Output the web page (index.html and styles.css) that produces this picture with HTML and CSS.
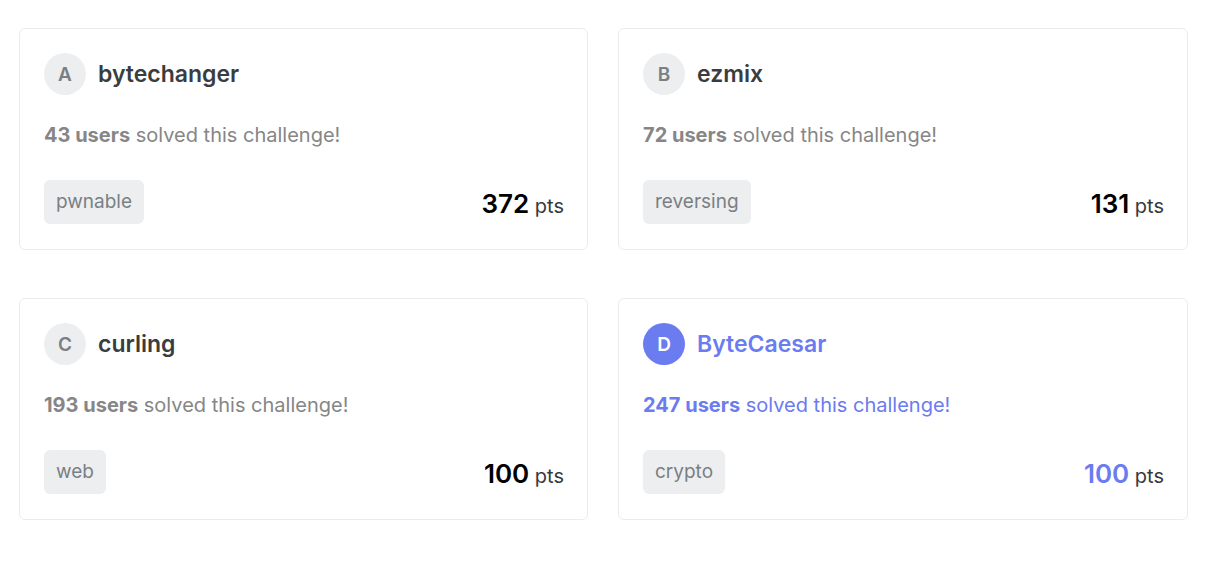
FILE: index.html
```html
<!DOCTYPE html>
<html lang="en">
<head>
    <meta charset="UTF-8">
    <meta name="viewport" content="width=device-width, initial-scale=1.0">
    <title>Challenges</title>
    <link rel="stylesheet" href="styles.css">
</head>
<body>
<!-- Challenge list -->
<section class="challenge-grid">
    <div class="challenge">
        <div class="challenge-head">
            <span class="challenge-letter">A</span>
            <h3>bytechanger</h3>
        </div>
        <p class="challenge-solved"><b>43 users</b> solved this challenge!</p>
        <div class="challenge-foot">
            <span class="challenge-tag">pwnable</span>
            <span class="challenge-points"><b>372</b> pts</span>
        </div>
    </div>

    <div class="challenge">
        <div class="challenge-head">
            <span class="challenge-letter">B</span>
            <h3>ezmix</h3>
        </div>
        <p class="challenge-solved"><b>72 users</b> solved this challenge!</p>
        <div class="challenge-foot">
            <span class="challenge-tag">reversing</span>
            <span class="challenge-points"><b>131</b> pts</span>
        </div>
    </div>

    <div class="challenge">
        <div class="challenge-head">
            <span class="challenge-letter">C</span>
            <h3>curling</h3>
        </div>
        <p class="challenge-solved"><b>193 users</b> solved this challenge!</p>
        <div class="challenge-foot">
            <span class="challenge-tag">web</span>
            <span class="challenge-points"><b>100</b> pts</span>
        </div>
    </div>

    <div class="challenge active">
        <div class="challenge-head">
            <span class="challenge-letter">D</span>
            <h3>ByteCaesar</h3>
        </div>
        <p class="challenge-solved"><b>247 users</b> solved this challenge!</p>
        <div class="challenge-foot">
            <span class="challenge-tag">crypto</span>
            <span class="challenge-points"><b>100</b> pts</span>
        </div>
    </div>
</section>
</body>
</html>
```

FILE: styles.css
```css
* {
    margin: 0;
    padding: 0;
    box-sizing: border-box;
}

body {
    font-family: Inter, "Noto Sans", sans-serif;
    background-color: #fff;
    color: #343a40;
}

.challenge-grid {
    display: grid;
    grid-template-columns: 569px 570px;
    column-gap: 30px;
    row-gap: 48px;
    padding: 28px 0 0 19px;
}

.challenge {
    border: 1px solid #e9ecef;
    border-radius: 6px;
    padding: 24px 23px 24px 24px;
    height: 222px;
}

.challenge-head {
    display: flex;
    align-items: center;
    gap: 12px;
    height: 42px;
}

.challenge-letter {
    width: 42px;
    height: 42px;
    border-radius: 50%;
    background-color: #eceef0;
    color: #7b7f84;
    display: flex;
    align-items: center;
    justify-content: center;
    font-size: 19px;
    font-weight: 600;
}

.challenge h3 {
    font-size: 23px;
    font-weight: 600;
    color: #3a3d40;
}

.challenge-solved {
    margin-top: 28px;
    font-size: 20px;
    line-height: 24px;
    color: #868686;
}

.challenge-solved b {
    font-weight: 700;
}

.challenge-foot {
    margin-top: 33px;
    display: flex;
    align-items: center;
    justify-content: space-between;
}

.challenge-tag {
    display: inline-block;
    height: 44px;
    line-height: 44px;
    padding: 0 12px;
    background-color: #eceef0;
    border-radius: 6px;
    color: #7b7f84;
    font-size: 19px;
}

.challenge-points {
    font-size: 20px;
    color: #343a40;
    padding-top: 3px;
}

.challenge-points b {
    font-size: 26px;
    font-weight: 600;
    color: #000;
}

/* Highlighted challenge */
.challenge.active .challenge-letter {
    background-color: #6b7bf0;
    color: #fff;
}

.challenge.active h3,
.challenge.active .challenge-solved,
.challenge.active .challenge-points b {
    color: #6b7bf0;
}
```
